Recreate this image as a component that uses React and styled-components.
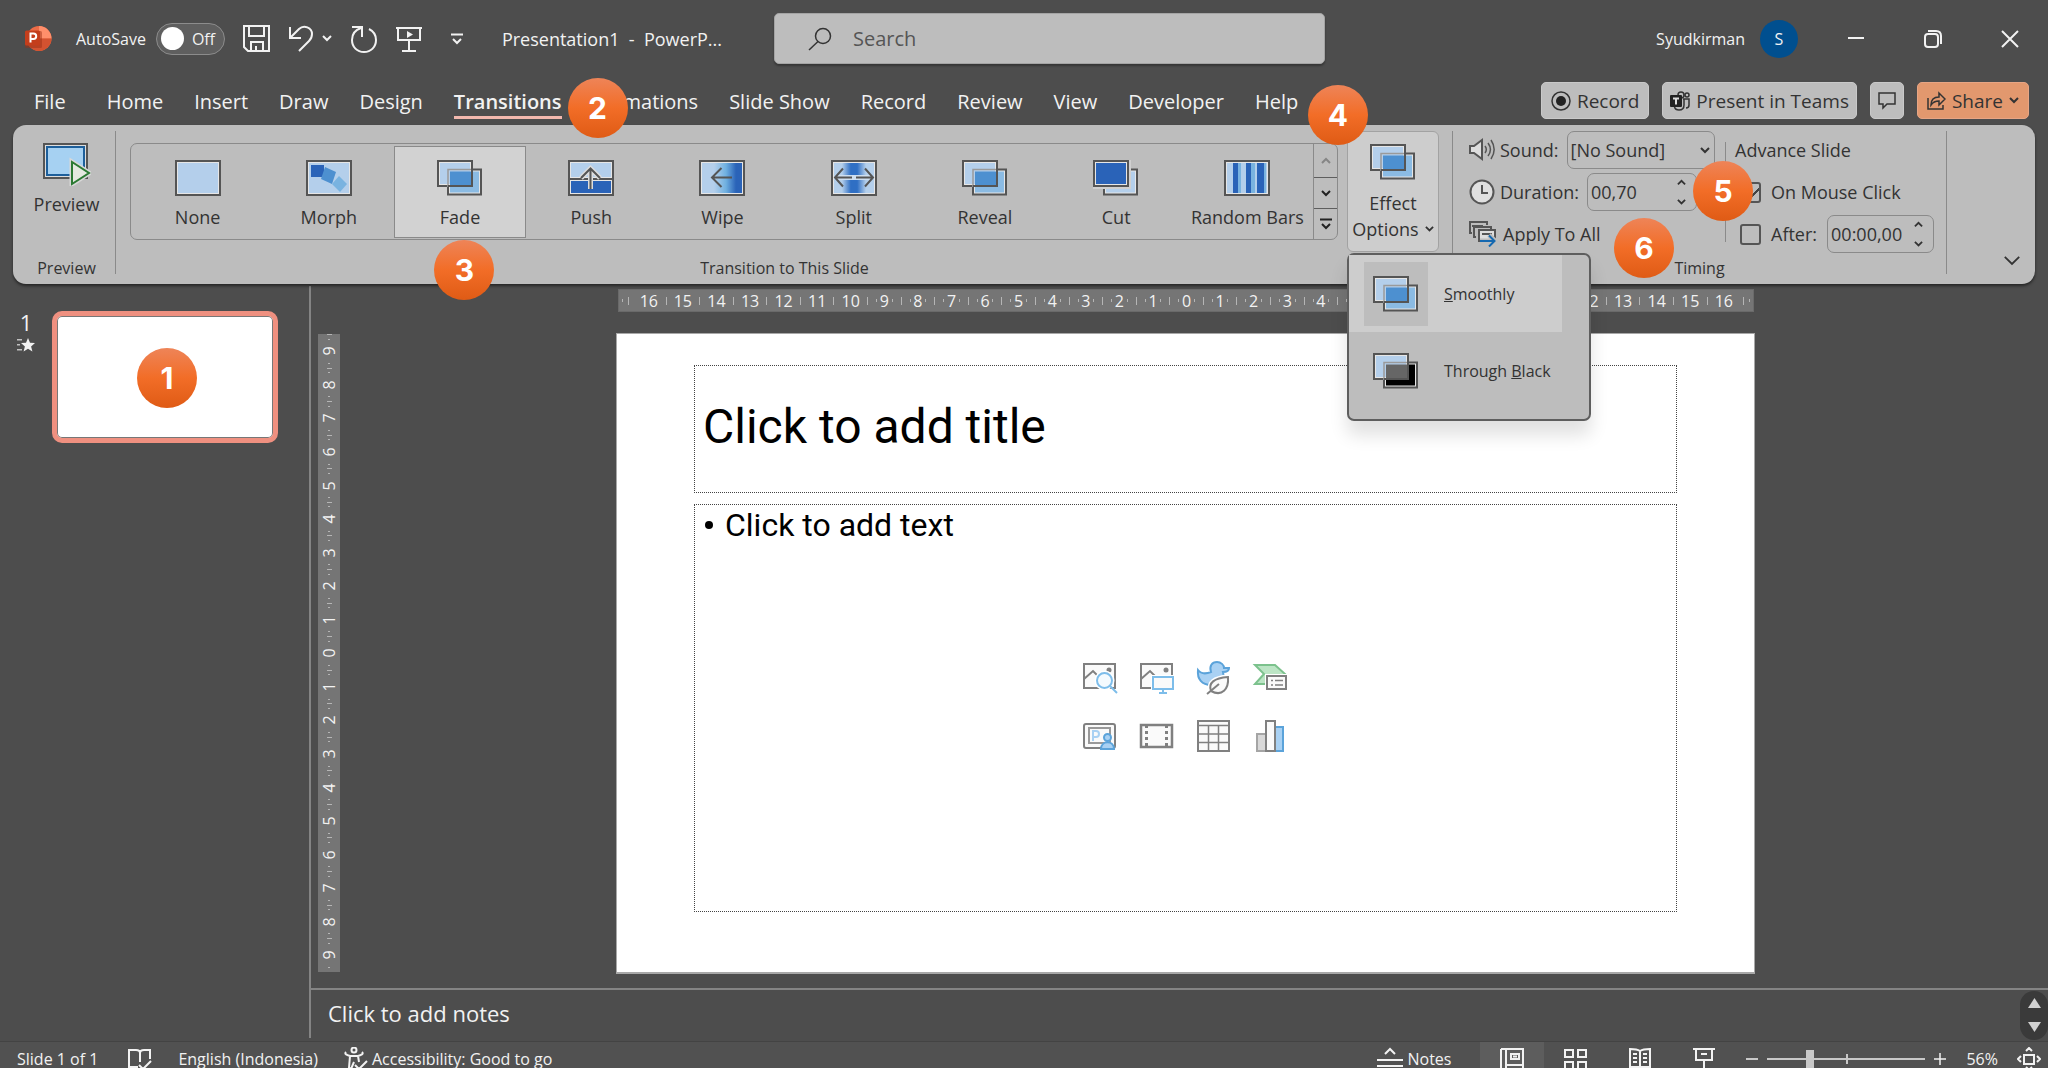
import React from "react";
import styled, { createGlobalStyle, css } from "styled-components";

const color = {
  chrome: "#4d4d4d",
  panel: "#bdbdbd",
  panelLight: "#cdcdcd",
  ink: "#333333",
  line: "#8a8a8a",
  outline: "#5e5e5e",
  light: "#f2f2f2",
  accent: "#f2b8ae",
};

const GlobalStyle = createGlobalStyle`
  *, *::before, *::after { box-sizing: border-box; }
  body {
    margin: 0;
    background: ${color.chrome};
    color: ${color.light};
    font-family: "Open Sans", "Noto Sans", sans-serif;
    font-size: 16px;
  }
  button, input, select { font: inherit; color: inherit; margin: 0; }
  svg { display: block; flex: none; }
`;

const App_ = styled.div`
  display: flex;
  flex-direction: column;
  height: 100vh;
  overflow: hidden;
`;

const BareButton = styled.button`
  display: flex;
  align-items: center;
  justify-content: center;
  padding: 0;
  border: 0;
  background: none;
`;

/* ---------- numbered step markers ---------- */

const Badge = styled.span`
  position: absolute;
  left: ${(p) => p.$x}px;
  top: ${(p) => p.$y}px;
  z-index: 10;
  display: flex;
  align-items: center;
  justify-content: center;
  width: 60px;
  height: 60px;
  border-radius: 50%;
  background: linear-gradient(#ee8458, #f26d27 50%, #df5b15);
  color: #fff;
  font: 700 30px/1 Inter, "Open Sans", sans-serif;
`;

/* ---------- title bar ---------- */

const TitleBar = styled.header`
  flex: none;
  display: grid;
  grid-template-columns: minmax(0, 774fr) minmax(0, 551fr) minmax(0, 723fr);
  align-items: center;
  height: 77px;
`;

const TitleLeft = styled.div`
  display: flex;
  align-items: center;
  padding-left: 25px;
  white-space: nowrap;
`;

const AutoSave = styled.label`
  display: flex;
  align-items: center;
  gap: 10px;
  margin-left: 24px;
  margin-right: 18px;
`;

const Switch = styled.span`
  display: flex;
  align-items: center;
  gap: 8px;
  width: 69px;
  height: 32px;
  padding-left: 4px;
  border: 1px solid #8c8c8c;
  border-radius: 16px;
  background: #5f5f5f;
`;

const SwitchBox = styled.input`
  appearance: none;
  width: 23px;
  height: 23px;
  border-radius: 50%;
  background: #fff;
`;

const QuickTools = styled.div`
  display: flex;
  align-items: center;
  gap: 18px;
`;

const UndoPair = styled.div`
  display: flex;
  align-items: center;
  gap: 8px;
`;

const CustomizeButton = styled(BareButton)`
  width: 34px;
`;

const DocTitle = styled.span`
  margin-left: 28px;
  font-size: 18px;
  white-space: pre;
`;

const SearchBox = styled.label`
  display: flex;
  align-items: center;
  gap: 19px;
  height: 51px;
  padding-left: 33px;
  border: 1px solid #a4a4a4;
  border-radius: 5px;
  background: ${color.panel};
  box-shadow: 0 2px 2px rgba(0, 0, 0, 0.3);
  color: ${color.ink};
`;

const SearchInput = styled.input`
  flex: 1;
  min-width: 0;
  border: 0;
  outline: 0;
  background: none;
  font-size: 20px;
  &::placeholder { color: #555; opacity: 1; }
`;

const TitleRight = styled.div`
  display: flex;
  align-items: center;
  justify-content: flex-end;
`;

const Avatar = styled.span`
  display: flex;
  align-items: center;
  justify-content: center;
  width: 38px;
  height: 38px;
  margin: 0 19px 0 15px;
  border-radius: 50%;
  background: #004f8f;
  font-size: 16px;
`;

const CaptionButton = styled(BareButton)`
  width: 77px;
  height: 77px;
`;

/* ---------- tab strip ---------- */

const TabBar = styled.nav`
  flex: none;
  display: flex;
  align-items: flex-start;
  justify-content: space-between;
  height: 48px;
  padding: 0 19px 0 34px;
  white-space: nowrap;
`;

const Tabs = styled.div`
  display: flex;
  gap: 31px;
`;

const Tab = styled.button`
  position: relative;
  display: flex;
  align-items: center;
  height: 42px;
  padding: 11px 0 0;
  border: 0;
  border-bottom: 3px solid ${(p) => (p.$active ? color.accent : "transparent")};
  background: none;
  font-size: 20px;
  font-weight: ${(p) => (p.$active ? 600 : 400)};
  line-height: 28px;
  &:first-child { margin-right: 10px; }
`;

const TabActions = styled.div`
  display: flex;
  gap: 13px;
  padding-top: 5px;
`;

const ActionButton = styled.button`
  display: flex;
  align-items: center;
  justify-content: center;
  gap: 6px;
  height: 37px;
  padding: 0 ${(p) => (p.$wide ? 9 : 7)}px;
  border: 1px solid ${(p) => (p.$share ? "#e7a584" : "#c9c9c9")};
  border-radius: 5px;
  background: ${(p) => (p.$share ? "#e2986e" : color.panel)};
  color: ${color.ink};
  font-size: 19px;
`;

/* ---------- ribbon ---------- */

const Ribbon = styled.section`
  position: relative;
  z-index: 5;
  flex: none;
  display: flex;
  height: 159px;
  margin: 0 13px;
  padding: 6px 0;
  border-radius: 13px;
  background: ${color.panel};
  box-shadow: 0 2px 3px rgba(0, 0, 0, 0.5);
  color: ${color.ink};
  font-size: 18px;
`;

const PreviewGroup = styled.div`
  display: flex;
  flex-direction: column;
  justify-content: space-between;
  width: 102px;
  padding-left: 5px;
`;

const Group = styled.div`
  display: flex;
  flex-direction: column;
  justify-content: space-between;
  flex: ${(p) => (p.$grow ? "1 1 0" : "none")};
  min-width: 0;
  padding: ${(p) => (p.$grow ? "0 13px 0 14px" : 0)};
`;

const GroupBody = styled.div`
  display: flex;
`;

const GroupLabel = styled.div`
  font-size: 16px;
  line-height: 20px;
  text-align: center;
`;

const Rule = styled.div`
  flex: none;
  width: 1px;
  margin: ${(p) => (p.$inner ? "11px 9px 11px 10px" : "0 0 4px")};
  background: ${color.line};
`;

const PreviewButton = styled(BareButton)`
  flex-direction: column;
  gap: 6px;
  padding-top: 12px;
  line-height: 24px;
`;

const Gallery = styled.div`
  display: flex;
  flex: 1;
  height: 97px;
  margin: 12px 9px 0 0;
  border: 1px solid ${color.line};
  border-radius: 7px;
`;

const GalleryItems = styled.div`
  flex: 1;
  display: grid;
  grid-template-columns: repeat(9, 1fr);
  padding: 2px 0 1px 1px;
`;

const GalleryItem = styled(BareButton)`
  position: relative;
  flex-direction: column;
  gap: 9px;
  padding-top: 4px;
  border: 1px solid ${(p) => (p.$active ? color.line : "transparent")};
  background: ${(p) => (p.$active ? "#d2d2d2" : "none")};
  line-height: 24px;
  white-space: nowrap;
`;

const GalleryScroll = styled.div`
  display: grid;
  grid-template-rows: 33px 31px 1fr;
  width: 24px;
  border-left: 1px solid ${color.line};
`;

const ScrollButton = styled(BareButton)`
  color: ${(p) => (p.$muted ? "#858585" : "#222")};
  & + & { border-top: 1px solid ${color.outline}; }
`;

const MenuAnchor = styled.div`
  position: relative;
`;

const EffectButton = styled(BareButton)`
  flex-direction: column;
  justify-content: flex-start;
  gap: 10px;
  width: 92px;
  height: 121px;
  padding-top: 12px;
  border: 1px solid #a2a2a2;
  border-radius: 6px;
  background: ${color.panelLight};
  line-height: 26px;
  white-space: nowrap;
`;

const Inline = styled.span`
  display: flex;
  align-items: center;
  gap: 6px;
`;

const Menu = styled.div`
  position: absolute;
  top: 122px;
  left: 0;
  width: 244px;
  height: 168px;
  border: 2px solid ${color.outline};
  border-radius: 7px;
  background: ${color.panel};
  box-shadow: 0 14px 18px rgba(0, 0, 0, 0.12);
`;

const MenuItem = styled.button`
  display: flex;
  align-items: center;
  gap: 16px;
  width: 213px;
  height: 77px;
  padding: 0 0 0 15px;
  border: 0;
  background: ${(p) => (p.$active ? color.panelLight : "none")};
  font-size: 16px;
  text-align: left;
  white-space: nowrap;
`;

const MenuTile = styled.span`
  display: flex;
  align-items: center;
  justify-content: center;
  width: 64px;
  height: 64px;
  background: ${color.panel};
`;

const TimingColumn = styled.div`
  position: relative;
  display: flex;
  flex-direction: column;
  gap: 4px;
  width: ${(p) => p.$w}px;
  margin-left: ${(p) => p.$ml || 0}px;
`;

const TimingRow = styled.div`
  display: flex;
  align-items: center;
  gap: ${(p) => (p.$check ? 10 : 8)}px;
  height: 38px;
  padding-left: ${(p) => (p.$check ? 5 : 0)}px;
  white-space: nowrap;
`;

const FieldLabel = styled.label`
  display: flex;
  align-items: center;
  gap: 5px;
`;

const ApplyButton = styled(BareButton)`
  gap: 6px;
`;

const Field = styled.span`
  display: flex;
  align-items: center;
  width: ${(p) => p.$w}px;
  height: 38px;
  padding: 0 4px 0 3px;
  border: 1px solid ${color.line};
  border-radius: 7px;
`;

const fieldText = css`
  flex: 1;
  width: 0;
  min-width: 0;
  padding: 0;
  border: 0;
  outline: 0;
  background: none;
`;

const TextInput = styled.input`${fieldText}`;

const Select = styled.select`
  ${fieldText}
  appearance: none;
`;

const Spinner = styled.span`
  display: flex;
  flex-direction: column;
  gap: 13px;
  padding-right: 6px;
`;

const CheckBox = styled.input`
  appearance: none;
  flex: none;
  width: 21px;
  height: 21px;
  border: 2px solid #555;
  border-radius: 3px;
  &:checked {
    background: linear-gradient(135deg, transparent 60%, #444 60%, #444 70%, transparent 70%);
  }
`;

const RibbonEnd = styled.div`
  display: flex;
  align-items: flex-end;
  justify-content: flex-end;
  width: 88px;
  padding: 0 14px 10px 0;
`;

/* ---------- workspace ---------- */

const Workspace = styled.main`
  flex: 1 0 auto;
  display: flex;
`;

const SlidePane = styled.aside`
  flex: none;
  display: flex;
  width: 311px;
  margin: 2px 0 3px;
  padding-top: 25px;
  border-right: 2px solid #848484;
`;

const SlideIndex = styled.div`
  display: flex;
  flex-direction: column;
  align-items: center;
  gap: 5px;
  width: 52px;
  font-size: 22px;
  line-height: 22px;
`;

const Thumbnail = styled.button`
  position: relative;
  width: 226px;
  height: 132px;
  padding: 0;
  border: 5px solid #ef9080;
  border-radius: 10px;
  background: #fff;
  box-shadow: inset 0 0 0 1px #777;
`;

const Editor = styled.div`
  flex: 1;
  min-width: 0;
  display: flex;
  flex-direction: column;
`;

const Stage = styled.div`
  display: grid;
  grid-template-columns: 22px minmax(0, 1fr);
  row-gap: 21px;
  padding: 5px 293px 14px 7px;
  column-gap: 276px;
`;

const HRuler = styled.div`
  grid-column: 2;
  display: flex;
  height: 23px;
  margin: 0 1px 0 2px;
  border: 1px solid #6a6a6a;
  background: #757575;
`;

const VRuler = styled.div`
  display: flex;
  flex-direction: column;
  margin: 1px 0 2px;
  background: #757575;
`;

const HMark = styled.div`
  flex: 1;
  display: flex;
  align-items: center;
  justify-content: space-between;
  line-height: 20px;
`;

const VMark = styled.div`
  flex: 1;
  display: flex;
  flex-direction: column;
  align-items: center;
  justify-content: space-between;
`;

const Digits = styled.span`
  flex: 1;
  text-align: center;
  white-space: nowrap;
`;

const VDigits = styled.span`
  line-height: 16px;
  transform: rotate(-90deg);
`;

const Tick = styled.i`
  flex: none;
  width: ${(p) => (p.$v ? (p.$dot ? 2 : 5) : 1)}px;
  height: ${(p) => (p.$v ? 1 : p.$dot ? 3 : 8)}px;
  background: #b5b5b5;
`;

const DotSlot = styled.span`
  display: flex;
  justify-content: flex-${(p) => p.$side};
  width: 9px;
`;

const RulerEnd = styled.div`
  display: flex;
  align-items: center;
  justify-content: space-around;
  width: 13px;
`;

const Slide = styled.article`
  display: flex;
  flex-direction: column;
  gap: 11px;
  aspect-ratio: 16 / 9;
  padding: 31px 77px 60px;
  border: 1px solid #a8a8a8;
  border-width: 1px 1px 2px;
  background: #fff;
  color: #000;
  font-family: Roboto, "Open Sans", sans-serif;
`;

const TitlePlaceholder = styled.div`
  flex: 123 0 0;
  display: flex;
  align-items: center;
  padding: 0 0 4px 8px;
  border: 1px dotted #444;
  font-size: 48px;
  line-height: 56px;
`;

const BodyPlaceholder = styled.div`
  flex: 410 0 0;
  display: grid;
  border: 1px dotted #444;
`;

const Bullet = styled.div`
  grid-area: 1 / 1;
  align-self: start;
  display: flex;
  align-items: center;
  gap: 12px;
  padding: 1px 0 0 10px;
  font-size: 32px;
  line-height: 38px;
  &::before {
    content: "";
    width: 8px;
    height: 8px;
    border-radius: 50%;
    background: #000;
  }
`;

const InsertGrid = styled.div`
  grid-area: 1 / 1;
  place-self: center;
  display: grid;
  grid-template-columns: repeat(4, 34px);
  gap: 23px;
`;

const Notes = styled.div`
  display: flex;
  align-items: center;
  justify-content: space-between;
  height: 53px;
  padding-left: 17px;
  border-top: 2px solid #848484;
  font-size: 22px;
`;

const NotesText = styled.div`
  padding-bottom: 4px;
`;

const NotesScroll = styled.div`
  display: flex;
  flex-direction: column;
  align-items: center;
  justify-content: space-around;
  width: 28px;
  height: 49px;
  border-radius: 14px;
  background: #3a3a3a;
`;

/* ---------- status bar ---------- */

const StatusBar = styled.footer`
  flex: none;
  display: flex;
  align-items: center;
  justify-content: space-between;
  height: 36px;
  padding: 0 7px 0 17px;
  border-top: 1px solid #434343;
  background: #515151;
  white-space: nowrap;
`;

const StatusSide = styled.div`
  display: flex;
  align-items: center;
  height: 100%;
`;

const StatusButton = styled(BareButton)`
  gap: 4px;
  margin-right: ${(p) => p.$mr || 0}px;
`;

const ViewButtons = styled.div`
  display: flex;
  height: 100%;
  margin-right: 10px;
`;

const ViewButton = styled(BareButton)`
  width: 64px;
  height: 100%;
  background: ${(p) => (p.$active ? "#5d5d5d" : "none")};
`;

const ZoomTrack = styled.span`
  position: relative;
  display: flex;
  align-items: center;
  width: 158px;
  margin: 0 9px;
  &::after {
    content: "";
    position: absolute;
    left: 50%;
    top: 50%;
    width: 2px;
    height: 10px;
    margin-top: -5px;
    background: #c8c8c8;
  }
`;

const ZoomSlider = styled.input`
  appearance: none;
  width: 100%;
  height: 24px;
  background: linear-gradient(#c8c8c8, #c8c8c8) center / 100% 2px no-repeat;
  &::-webkit-slider-thumb {
    appearance: none;
    width: 8px;
    height: 19px;
    background: #c8c8c8;
  }
`;

/* ---------- icons ---------- */

const Line = ({ w, h, children, sw = 2, vb, ...rest }) => (
  <svg width={w} height={h} viewBox={vb || `0 0 ${w} ${h}`} fill="none" stroke="currentColor" strokeWidth={sw} aria-hidden="true" {...rest}>
    {children}
  </svg>
);

const Chevron = ({ up, w = 10, sw = 2 }) => (
  <Line w={w} h={w * 0.7} sw={sw} vb="0 0 10 7">
    <path d={up ? "M1 6l4-4 4 4" : "M1 1l4 4 4-4"} />
  </Line>
);

const MoreIcon = ({ w = 12 }) => (
  <Line w={w} h={12}><path d={`M0 1.5h${w}M2 6l${w / 2 - 2} 4 ${w / 2 - 2}-4`} /></Line>
);

const Logo = () => (
  <svg width="27" height="27" viewBox="0 0 27 27" aria-hidden="true">
    <circle cx="14" cy="13.5" r="12.5" fill="#ed6c47" />
    <path d="M14 1a12.5 12.5 0 0 1 12.5 12.5H14z" fill="#ff8f6b" />
    <path d="M1.5 13.5h25a12.5 12.5 0 0 1-25 0z" fill="#d35230" />
    <rect x="0" y="6" width="17" height="17" rx="1.5" fill="#9c2f16" opacity=".5" />
    <rect x="0" y="5.5" width="15" height="15" rx="1.5" fill="#c43e1c" />
    <path d="M5.5 17.500V8.500h3a2.700 2.700 0 0 1 0 5.400h-3" fill="none" stroke="#fff" strokeWidth="2" />
  </svg>
);

const SaveIcon = () => (
  <Line w={27} h={27}><path d="M1 1h25v25H5l-4-4zM6 1v10h15V1M8 26v-9h12v9M13 21v5" /></Line>
);
const UndoIcon = () => (
  <Line w={26} h={27}><path d="M2 2v11h11M2 13L11 4c5-5 13-1 13 5 0 3-1 5-3 7l-10 10" /></Line>
);
const RedoIcon = () => (
  <Line w={28} h={28}><path d="M2 2h10v10M11 3C5 5 2 9 2 15c0 7 5 12 12 12s12-5 12-12c0-5-3-9-7-11" /></Line>
);
const PresentIcon = () => (
  <Line w={26} h={26}><path d="M0 2h26M2 2v12h22V2M13 14v10M6 25h14" /><path d="M11 5l6 3.500-6 3.500z" fill="currentColor" stroke="none" /></Line>
);

const Pane = ({ x, y, w, h, fill, edge = "#555" }) => (
  <g>
    <rect x={x + 1} y={y + 1} width={w - 2} height={h - 2} fill="#e6e6e6" stroke={edge} strokeWidth="2" />
    <rect x={x + 3} y={y + 3} width={w - 6} height={h - 6} fill={fill} />
  </g>
);

const Overlap = ({ back = "#8bbbe3", mid = "#4d90d0" }) => (
  <svg width="46" height="36" viewBox="0 0 46 36" aria-hidden="true">
    <Pane x={10} y={8.500} w={35} h={27} fill={back} />
    <Pane x={0} y={0} w={36} h={27} fill="#b4cfeb" />
    <path d="M11 27V9.500h24" fill="none" stroke="#9a9a9a" strokeWidth="1.500" />
    <rect x="13" y="11.500" width="21" height="13.500" fill={mid} />
    <path d="M35 8v18H11" fill="none" stroke="#555" strokeWidth="2" />
  </svg>
);

const PushArrow = (p) => <path d="M22.500 29V10M13 18l9.500-9.500L32 18" fill="none" {...p} />;

const galleryArt = {
  None: <Pane x={0} y={0} w={46} h={36} fill="#b4cfeb" />,
  Morph: (
    <>
      <Pane x={0} y={0} w={46} h={36} fill="#b4cfeb" />
      <path d="M5 5h13v12H5z" fill="#2a63b8" />
      <path d="M19 7l11 5-4 12-11-5z" fill="#4d90d0" />
      <path d="M33 16l8 8-7 8-8-8z" fill="#79b3e0" />
    </>
  ),
  Push: (
    <>
      <Pane x={0} y={0} w={46} h={20} fill="#b4cfeb" />
      <Pane x={0} y={18} w={46} h={18} fill="#2a63b8" />
      <PushArrow stroke="#ddd" strokeWidth="5" />
      <PushArrow stroke="#555" strokeWidth="2" />
    </>
  ),
  Wipe: (
    <>
      <defs>
        <linearGradient id="wipe">
          <stop offset=".3" stopColor="#b4cfeb" />
          <stop offset=".6" stopColor="#6fb0e0" />
          <stop offset=".85" stopColor="#2a63b8" />
        </linearGradient>
      </defs>
      <Pane x={0} y={0} w={46} h={36} fill="url(#wipe)" />
      <path d="M33 17.500H14M22.500 8L13 17.500l9.500 9.500" fill="none" stroke="#555" strokeWidth="2" />
    </>
  ),
  Split: (
    <>
      <defs>
        <linearGradient id="split">
          <stop offset=".2" stopColor="#b4cfeb" />
          <stop offset=".42" stopColor="#2f6fc4" />
          <stop offset=".58" stopColor="#2f6fc4" />
          <stop offset=".8" stopColor="#b4cfeb" />
        </linearGradient>
      </defs>
      <Pane x={0} y={0} w={46} h={36} fill="url(#split)" />
      <path d="M5 17.500h36" stroke="#cfdff0" strokeWidth="5" />
      <path d="M21 17.500H4M12 8.500L4 17.500l8 9M25 17.500h17M34 8.500l8 9-8 9" fill="none" stroke="#555" strokeWidth="2" />
    </>
  ),
  Cut: (
    <>
      <Pane x={10} y={8.500} w={35} h={27} fill="#b4cfeb" />
      <path d="M0 0h38v29H0z" fill="#d0d0d0" />
      <Pane x={0} y={0} w={36} h={27} fill="#2a63b8" />
    </>
  ),
  "Random Bars": (
    <>
      <Pane x={0} y={0} w={46} h={36} fill="#b4cfeb" />
      <path d="M9 3h5v30H9zM22 3h5v30h-5zM33 3h7v30h-7z" fill="#2a63b8" />
      <path d="M14 3h3v30h-3zM27 3h4v30h-4zM40 3h2v30h-2z" fill="#79b3e0" />
    </>
  ),
};

const GalleryIcon = ({ name }) =>
  name === "Fade" || name === "Reveal" ? (
    <Overlap />
  ) : (
    <svg width="46" height="36" viewBox="0 0 46 36" aria-hidden="true">{galleryArt[name]}</svg>
  );

const PreviewIcon = () => (
  <svg width="48" height="43" viewBox="0 0 48 43" aria-hidden="true">
    <rect x="1" y="1" width="43" height="34" fill="#ddd" stroke="#555" strokeWidth="2" />
    <rect x="4" y="4" width="37" height="28" fill="#a6d1f2" stroke="#1d5f9b" strokeWidth="2" />
    <path d="M29 19v22l17-11z" fill="#e4e9e0" stroke="#d8d8d8" strokeWidth="5" />
    <path d="M29 19v22l17-11z" fill="#e4e9e0" stroke="#2b7a33" strokeWidth="2" />
  </svg>
);

const SoundIcon = () => (
  <Line w={26} h={24} sw={2} color="#555"><path d="M1 8h4l8-6v19l-8-6H1z" fill="#ddd" /><path d="M16 8c1.500 2 1.500 5 0 7M19 5c3 4 3 9 0 13M22 2c4 6 4 13 0 19" strokeWidth="1.500" /></Line>
);
const ClockIcon = () => (
  <Line w={26} h={26} color="#555"><circle cx="13" cy="13" r="11.500" fill="#e0e0e0" /><path d="M13 6v8h6" /></Line>
);
const ApplyIcon = () => (
  <Line w={28} h={26} color="#555">
    <path d="M3 12H1V1h17v3M3 5h11M7 16H5V6h17v3" /><rect x="10" y="9" width="16" height="11" fill="#ddd" /><path d="M13 13h10" />
    <path d="M11 20h14M20 14l6 6-6 6" stroke="#bdbdbd" strokeWidth="5" />
    <path d="M11 20h15M20 14.500l5.500 5.500-5.500 5.500" stroke="#1468b0" />
  </Line>
);
const RecordIcon = () => (
  <Line w={20} h={20} sw={1.5}><circle cx="10" cy="10" r="9" /><circle cx="10" cy="10" r="5" fill="#222" stroke="none" /></Line>
);
const TeamsIcon = () => (
  <Line w={20} h={20} sw={1.500}>
    <circle cx="11" cy="4" r="3" /><circle cx="17" cy="4" r="2" /><path d="M13 8h6v6c0 2-1 3-3 3M14 8v6c0 3-2 5-5 5-2 0-4-1-4.500-3" />
    <rect x="0" y="4" width="12" height="12" rx="1" fill="#222" stroke="none" /><path d="M3 7.500h6M6 7.500v6" stroke="#ddd" strokeWidth="2" />
  </Line>
);
const CommentIcon = () => (
  <Line w={18} h={18} sw={1.5}><path d="M1 1h16v11H9l-4 4v-4H1z" /></Line>
);
const ShareIcon = () => (
  <Line w={19} h={19} sw={1.5}><path d="M1 7v11h15v-4M4 14c0-5 3-8 8-8V2l6 6-6 6v-4c-4 0-6 1-8 4z" /></Line>
);
const StarIcon = () => (
  <svg width="18" height="14" viewBox="0 0 18 14" fill="#f2f2f2" aria-hidden="true">
    <path d="M11 0l2 4.800 5 .3-3.900 3.300 1.300 5L11 10.700 6.600 13.400l1.300-5L4 5.100l5-.3z" /><path d="M0 1h5v1.500H0zM0 6h3v1.500H0zM0 11h5v1.500H0z" opacity=".7" />
  </svg>
);

const gray = "#808080";
const insertIcons = [
  ["Stock Images", <><path d="M1 26V2h31v24z" fill="#fafafa" stroke={gray} /><path d="M1 17l9-8 7 7" stroke={gray} /><circle cx="26" cy="8" r="2.500" fill={gray} stroke="none" /><circle cx="21.500" cy="18.500" r="8" fill="#fff" stroke="#fff" strokeWidth="4" /><circle cx="21.500" cy="18.500" r="7.500" fill="#f4fafe" stroke="#7dbdea" /><path d="M27 24l7 7" stroke="#7dbdea" /></>],
  ["Pictures", <><path d="M1 26V2h31v24z" fill="#fafafa" stroke={gray} /><path d="M1 17l9-8 9 9" stroke={gray} /><circle cx="26" cy="8" r="2.500" fill={gray} stroke="none" /><path d="M11 13h23v17H11z" fill="#fff" stroke="none" /><path d="M13 15h20v12H13zM23 27v4M19 31h8" fill="#fafafa" stroke="#7dbdea" /></>],
  ["Icons", <><path d="M1 8c3 4 8 4 13 2-2-6 1-10 6-10 4 0 7 3 7 6h5c0 3-3 4-6 4 2 8-3 13-12 13C5 23 0 17 1 8z" fill="#a9d1f3" stroke="#5ba3da" /><path d="M10 32l11-11M14 29c-3-8 3-13 17-14 1 12-6 20-17 14z" fill="#fafafa" stroke="#fff" strokeWidth="5" /><path d="M14 29c-3-8 3-13 17-14 1 12-6 20-17 14z" fill="#fafafa" stroke={gray} /><path d="M10 32l12-10" stroke={gray} /></>],
  ["SmartArt", <><path d="M1 3h20l10 9-10 10H1l9-10z" fill="#bce5c5" stroke="#7cc28d" /><path d="M11 12h24v18H11z" fill="#fff" stroke="none" /><path d="M13 14h19v13H13z" fill="#fafafa" stroke={gray} /><path d="M17 18.500h2M21 18.500h8M17 23h2M21 23h8" stroke={gray} strokeWidth="1.500" /></>],
  ["Cameo", <><rect x="1" y="5" width="31" height="24" rx="2" fill="#fafafa" stroke={gray} /><path d="M6 9h21v15H6z" stroke="#999" /><path d="M10 22V12h3a3 3 0 0 1 0 6h-3" stroke="#a9d1f3" /><path d="M18 30c0-9 13-9 13 0z" fill="#a9d1f3" stroke="#5ba3da" /><circle cx="24.500" cy="18.500" r="3.500" fill="#a9d1f3" stroke="#5ba3da" /></>],
  ["Video", <><path d="M1 6h31v22H1z" fill="#fafafa" stroke={gray} strokeWidth="2.500" /><path d="M6.500 6v22M26.500 6v22" stroke={gray} strokeWidth="3" strokeDasharray="3 3" /></>],
  ["Table", <><path d="M1 2h31v30H1z" fill="#fafafa" stroke={gray} /><path d="M1 6.500h31M1 15h31M1 23.500h31M11.500 7v25M21.500 7v25" stroke={gray} strokeWidth="1.500" /></>],
  ["Chart", <><path d="M3 15h9v17H3z" fill="#d8d8d8" stroke="#a5a5a5" /><path d="M21 8h8v24h-8z" fill="#a9d1f3" stroke="#5ba3da" /><path d="M12 2h9v30h-9z" fill="#fafafa" stroke={gray} /></>],
];

const SpellIcon = () => (
  <Line w={24} h={24}><path d="M10 20H1V3h7c2 0 4 1 4 3v9M12 6c0-2 2-3 4-3h6v9M11 18l4 4 8-8" /></Line>
);
const AccessIcon = () => (
  <Line w={24} h={24}><circle cx="10" cy="3" r="2.500" /><path d="M2 5c-2 2 1 3 4 4l-1 12 2 1 3-7M18 5c2 2-1 3-4 4l1 6M6 9h8M11 18l4 4 8-8" /></Line>
);
const NotesIcon = () => (
  <Line w={26} h={24}><path d="M8 7l5-5 5 5M0 13h26M0 19h26" /></Line>
);
const NormalIcon = () => (
  <Line w={24} h={22}><path d="M1 1h22v24M1 1v24M6 1v24M6 17h17M11 6h8v5h-8zM13 8.500h4" /></Line>
);
const SorterIcon = () => (
  <Line w={24} h={22}><path d="M1 2h8v7H1zM14 2h8v7h-8zM1 14h8v7H1zM14 14h8v7h-8z" /></Line>
);
const ReadingIcon = () => (
  <Line w={22} h={24}><path d="M11 4C8 2 5 2 1 2v18h9l1 2 1-2h9V2c-4 0-7 0-10 2zM11 4v18M4 7h4M4 11h4M4 15h4M14 7h4M14 11h4M14 15h4" /></Line>
);
const ShowIcon = () => (
  <Line w={22} h={24}><path d="M0 2h22M3 2v11h16V2M8 7h6M11 13v9M5 22h12" /></Line>
);
const FitIcon = () => (
  <Line w={24} h={24}><path d="M7 8h10v9H7zM9 4l3-3 3 3M9 20l3 3 3-3M4 9l-3 3 3 3M20 9l3 3-3 3" /></Line>
);

/* ---------- data ---------- */

const tabNames = ["File", "Home", "Insert", "Draw", "Design", "Transitions", "Animations", "Slide Show", "Record", "Review", "View", "Developer", "Help"];
const transitions = ["None", "Morph", "Fade", "Push", "Wipe", "Split", "Reveal", "Cut", "Random Bars"];
const scale = (n) => Array.from({ length: n * 2 + 1 }, (_, i) => Math.abs(i - n));

const SpinField = ({ id, value, w, label }) => (
  <Field $w={w}>
    <TextInput id={id} defaultValue={value} aria-label={label} />
    <Spinner>
      <BareButton aria-label="Increase"><Chevron up w={9} /></BareButton>
      <BareButton aria-label="Decrease"><Chevron w={9} /></BareButton>
    </Spinner>
  </Field>
);

function Header() {
  return (
    <TitleBar>
      <TitleLeft>
        <Logo />
        <AutoSave>
          AutoSave
          <Switch><SwitchBox type="checkbox" role="switch" />Off</Switch>
        </AutoSave>
        <QuickTools>
          <BareButton aria-label="Save"><SaveIcon /></BareButton>
          <UndoPair>
            <BareButton aria-label="Undo"><UndoIcon /></BareButton>
            <BareButton aria-label="Undo list"><Chevron /></BareButton>
          </UndoPair>
          <BareButton aria-label="Redo"><RedoIcon /></BareButton>
          <BareButton aria-label="Start from beginning"><PresentIcon /></BareButton>
          <CustomizeButton aria-label="Customize toolbar"><MoreIcon /></CustomizeButton>
        </QuickTools>
        <DocTitle>{"Presentation1  -  PowerP..."}</DocTitle>
      </TitleLeft>
      <SearchBox>
        <Line w={24} h={24} sw={1.5}><circle cx="15" cy="9" r="7.500" /><path d="M10 14.500L1 23" /></Line>
        <SearchInput type="search" aria-label="Search" placeholder="Search" />
      </SearchBox>
      <TitleRight>
        Syudkirman
        <Avatar>S</Avatar>
        <CaptionButton aria-label="Minimize"><Line w={16} h={16}><path d="M0 7h16" /></Line></CaptionButton>
        <CaptionButton aria-label="Restore"><Line w={18} h={18}><rect x="1" y="4" width="13" height="13" rx="3" /><path d="M4 1h8c3 0 5 2 5 5v8" /></Line></CaptionButton>
        <CaptionButton aria-label="Close"><Line w={18} h={18}><path d="M1 1l16 16M17 1L1 17" /></Line></CaptionButton>
      </TitleRight>
    </TitleBar>
  );
}

function TabStrip() {
  return (
    <TabBar>
      <Tabs>
        {tabNames.map((name) => (
          <Tab key={name} $active={name === "Transitions"}>
            {name}
            {name === "Animations" && <Badge $x={-25} $y={1}>2</Badge>}
          </Tab>
        ))}
      </Tabs>
      <TabActions>
        <ActionButton $wide><RecordIcon />Record</ActionButton>
        <ActionButton><TeamsIcon />Present in Teams</ActionButton>
        <ActionButton aria-label="Comments"><CommentIcon /></ActionButton>
        <ActionButton $wide $share><ShareIcon />Share<Chevron /></ActionButton>
      </TabActions>
    </TabBar>
  );
}

function TransitionsRibbon() {
  return (
    <Ribbon>
      <PreviewGroup>
        <PreviewButton><PreviewIcon />Preview</PreviewButton>
        <GroupLabel>Preview</GroupLabel>
      </PreviewGroup>
      <Rule />
      <Group $grow>
        <GroupBody>
          <Gallery>
            <GalleryItems>
              {transitions.map((name) => (
                <GalleryItem key={name} $active={name === "Fade"}>
                  <GalleryIcon name={name} />
                  {name}
                  {name === "Fade" && <Badge $x={39} $y={93}>3</Badge>}
                </GalleryItem>
              ))}
            </GalleryItems>
            <GalleryScroll>
              <ScrollButton $muted aria-label="Previous row"><Chevron up /></ScrollButton>
              <ScrollButton aria-label="Next row"><Chevron /></ScrollButton>
              <ScrollButton aria-label="More transitions"><MoreIcon /></ScrollButton>
            </GalleryScroll>
          </Gallery>
          <MenuAnchor>
            <EffectButton>
              <Overlap />
              <span>
                Effect
                <Inline>Options <Chevron w={9} /></Inline>
              </span>
            </EffectButton>
            <Badge $x={-39} $y={-46}>4</Badge>
            <Menu role="menu">
              <MenuItem role="menuitem" $active>
                <MenuTile><Overlap /></MenuTile>
                <span><u>S</u>moothly</span>
              </MenuItem>
              <MenuItem role="menuitem">
                <MenuTile><Overlap back="#000" mid="#666" /></MenuTile>
                <span>Through <u>B</u>lack</span>
              </MenuItem>
            </Menu>
          </MenuAnchor>
        </GroupBody>
        <GroupLabel>Transition to This Slide</GroupLabel>
      </Group>
      <Rule />
      <Group>
        <GroupBody>
          <TimingColumn $w={246} $ml={16}>
            <TimingRow>
              <FieldLabel htmlFor="sound"><SoundIcon />Sound:</FieldLabel>
              <Field $w={149}>
                <Select id="sound"><option>[No Sound]</option></Select>
                <Chevron />
              </Field>
            </TimingRow>
            <TimingRow>
              <FieldLabel htmlFor="duration"><ClockIcon />Duration:</FieldLabel>
              <SpinField id="duration" value="00,70" w={110} />
            </TimingRow>
            <TimingRow>
              <ApplyButton><ApplyIcon />Apply To All</ApplyButton>
            </TimingRow>
            <Badge $x={224} $y={30}>5</Badge>
            <Badge $x={145} $y={87}>6</Badge>
          </TimingColumn>
          <Rule $inner />
          <TimingColumn $w={211}>
            <TimingRow>Advance Slide</TimingRow>
            <TimingRow $check>
              <CheckBox id="click" type="checkbox" defaultChecked />
              <label htmlFor="click">On Mouse Click</label>
            </TimingRow>
            <TimingRow $check>
              <CheckBox id="after" type="checkbox" />
              <label htmlFor="after">After:</label>
              <SpinField id="after-time" value="00:00,00" w={107} label="After time" />
            </TimingRow>
          </TimingColumn>
        </GroupBody>
        <GroupLabel>Timing</GroupLabel>
      </Group>
      <Rule />
      <RibbonEnd>
        <BareButton aria-label="Collapse ribbon"><Chevron w={18} sw={1} /></BareButton>
      </RibbonEnd>
    </Ribbon>
  );
}

function SlideEditor() {
  return (
    <Editor>
      <Stage>
        <HRuler>
          <RulerEnd><Tick $dot /><Tick /></RulerEnd>
          {scale(16).map((n, i) => (
            <HMark key={i}>
              {i > 0 && <Tick />}
              {n < 10 && <DotSlot $side="end"><Tick $dot /></DotSlot>}
              <Digits>{n}</Digits>
              {n < 10 && <DotSlot $side="start"><Tick $dot /></DotSlot>}
            </HMark>
          ))}
          <RulerEnd><Tick /><Tick $dot /></RulerEnd>
        </HRuler>
        <VRuler>
          {scale(9).map((n, i) => (
            <VMark key={i}>
              <Tick $v />
              <Tick $v $dot />
              <VDigits>{n}</VDigits>
              <Tick $v $dot />
              <span />
            </VMark>
          ))}
        </VRuler>
        <Slide>
          <TitlePlaceholder>Click to add title</TitlePlaceholder>
          <BodyPlaceholder>
            <Bullet>Click to add text</Bullet>
            <InsertGrid>
              {insertIcons.map(([name, art]) => (
                <BareButton key={name} aria-label={name}><Line w={34} h={34} overflow="visible">{art}</Line></BareButton>
              ))}
            </InsertGrid>
          </BodyPlaceholder>
        </Slide>
      </Stage>
      <Notes>
        <NotesText>Click to add notes</NotesText>
        <NotesScroll>
          <BareButton aria-label="Scroll up"><svg width="13" height="10" fill="#d0d0d0"><path d="M6.500 0L13 10H0z" /></svg></BareButton>
          <BareButton aria-label="Scroll down"><svg width="13" height="10" fill="#d0d0d0"><path d="M6.500 10L13 0H0z" /></svg></BareButton>
        </NotesScroll>
      </Notes>
    </Editor>
  );
}

function Status() {
  return (
    <StatusBar>
      <StatusSide>
        <StatusButton $mr={30}>Slide 1 of 1</StatusButton>
        <StatusButton $mr={26} aria-label="Spelling"><SpellIcon /></StatusButton>
        <StatusButton $mr={26}>English (Indonesia)</StatusButton>
        <StatusButton><AccessIcon />Accessibility: Good to go</StatusButton>
      </StatusSide>
      <StatusSide>
        <StatusButton $mr={29}><NotesIcon />Notes</StatusButton>
        <ViewButtons>
          <ViewButton $active aria-label="Normal"><NormalIcon /></ViewButton>
          <ViewButton aria-label="Slide Sorter"><SorterIcon /></ViewButton>
          <ViewButton aria-label="Reading View"><ReadingIcon /></ViewButton>
          <ViewButton aria-label="Slide Show"><ShowIcon /></ViewButton>
        </ViewButtons>
        <StatusButton aria-label="Zoom out"><Line w={12} h={12} sw={1.5}><path d="M0 6h12" /></Line></StatusButton>
        <ZoomTrack><ZoomSlider type="range" aria-label="Zoom" min="0" max="100" defaultValue="26" /></ZoomTrack>
        <StatusButton $mr={20} aria-label="Zoom in"><Line w={12} h={12} sw={1.5}><path d="M0 6h12M6 0v12" /></Line></StatusButton>
        <StatusButton $mr={19}>56%</StatusButton>
        <StatusButton aria-label="Fit slide"><FitIcon /></StatusButton>
      </StatusSide>
    </StatusBar>
  );
}

export default function App() {
  return (
    <App_>
      <GlobalStyle />
      <Header />
      <TabStrip />
      <TransitionsRibbon />
      <Workspace>
        <SlidePane>
          <SlideIndex>1<StarIcon /></SlideIndex>
          <Thumbnail aria-label="Slide 1"><Badge $x={80} $y={32}>1</Badge></Thumbnail>
        </SlidePane>
        <SlideEditor />
      </Workspace>
      <Status />
    </App_>
  );
}
